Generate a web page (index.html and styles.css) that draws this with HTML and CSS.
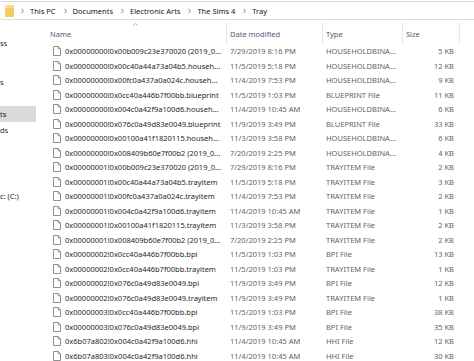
FILE: index.html
```html
<!DOCTYPE html>
<html lang="en">
<head>
<meta charset="utf-8">
<title>Tray</title>
<link rel="stylesheet" href="styles.css">
</head>
<body>
<svg class="defs" width="0" height="0" aria-hidden="true">
  <symbol id="file" viewBox="0 0 8 10">
    <path d="M0.5 0.5H5.2L7.5 2.8V9.5H0.5Z" fill="#fff" stroke="#8f8f8f"/>
    <path d="M5.2 0.5V2.8H7.5" fill="none" stroke="#8f8f8f"/>
  </symbol>
  <symbol id="chev" viewBox="0 0 3 6">
    <path d="M0.5 0.8L2.4 3L0.5 5.2" fill="none" stroke="#777" stroke-width="0.9"/>
  </symbol>
</svg>
<div class="window">
  <header class="addressbar">
    <div class="address">
      <svg class="folder" width="9" height="12" viewBox="0 0 9 12">
        <rect x="0" y="0" width="9" height="12" fill="#f3cd61"/>
        <rect x="0" y="0" width="9" height="3" fill="#f8dc8a"/>
      </svg>
      <svg class="sep" width="3" height="6"><use href="#chev"/></svg>
      <span class="crumb">This PC</span>
      <svg class="sep" width="3" height="6"><use href="#chev"/></svg>
      <span class="crumb">Documents</span>
      <svg class="sep" width="3" height="6"><use href="#chev"/></svg>
      <span class="crumb">Electronic Arts</span>
      <svg class="sep" width="3" height="6"><use href="#chev"/></svg>
      <span class="crumb">The Sims 4</span>
      <svg class="sep" width="3" height="6"><use href="#chev"/></svg>
      <span class="crumb">Tray</span>
    </div>
  </header>
  <div class="main">
    <nav class="sidebar">
      <div class="nav-item n1">ss</div>
      <div class="nav-item n2">s</div>
      <div class="nav-item n3 selected">ts</div>
      <div class="nav-item n4">ds</div>
      <div class="nav-item n5">c: (C:)</div>
    </nav>
    <section class="files">
      <div class="grid header">
        <div class="hcell hname">Name
          <svg class="sort" width="5" height="3" viewBox="0 0 5 3"><path d="M0.4 2.6L2.5 0.6L4.6 2.6" fill="none" stroke="#9a9a9a" stroke-width="0.8"/></svg>
        </div>
        <div class="hcell">Date modified</div>
        <div class="hcell">Type</div>
        <div class="hcell">Size</div>
      </div>
      <div class="list">
        <div class="grid row"><div class="fname"><svg class="ficon"><use href="#file"/></svg><span>0x00000000!0x00b009c23e370020 (2019_0...</span></div><div class="meta">7/29/2019 8:16 PM</div><div class="meta">HOUSEHOLDBINA...</div><div class="meta size">5 KB</div></div>
        <div class="grid row"><div class="fname"><svg class="ficon"><use href="#file"/></svg><span>0x00000000!0x00c40a44a73a04b5.househ...</span></div><div class="meta">11/5/2019 5:18 PM</div><div class="meta">HOUSEHOLDBINA...</div><div class="meta size">12 KB</div></div>
        <div class="grid row"><div class="fname"><svg class="ficon"><use href="#file"/></svg><span>0x00000000!0x00fc0a437a0a024c.househ...</span></div><div class="meta">11/4/2019 7:53 PM</div><div class="meta">HOUSEHOLDBINA...</div><div class="meta size">9 KB</div></div>
        <div class="grid row"><div class="fname"><svg class="ficon"><use href="#file"/></svg><span>0x00000000!0x0cc40a446b7f00bb.blueprint</span></div><div class="meta">11/5/2019 1:03 PM</div><div class="meta">BLUEPRINT File</div><div class="meta size">11 KB</div></div>
        <div class="grid row"><div class="fname"><svg class="ficon"><use href="#file"/></svg><span>0x00000000!0x004c0a42f9a100d6.househ...</span></div><div class="meta">11/4/2019 10:45 AM</div><div class="meta">HOUSEHOLDBINA...</div><div class="meta size">6 KB</div></div>
        <div class="grid row"><div class="fname"><svg class="ficon"><use href="#file"/></svg><span>0x00000000!0x076c0a49d83e0049.blueprint</span></div><div class="meta">11/9/2019 3:49 PM</div><div class="meta">BLUEPRINT File</div><div class="meta size">33 KB</div></div>
        <div class="grid row"><div class="fname"><svg class="ficon"><use href="#file"/></svg><span>0x00000000!0x00100a41f1820115.househ...</span></div><div class="meta">11/3/2019 3:58 PM</div><div class="meta">HOUSEHOLDBINA...</div><div class="meta size">6 KB</div></div>
        <div class="grid row"><div class="fname"><svg class="ficon"><use href="#file"/></svg><span>0x00000000!0x008409b60e7f00b2 (2019_0...</span></div><div class="meta">7/20/2019 2:25 PM</div><div class="meta">HOUSEHOLDBINA...</div><div class="meta size">4 KB</div></div>
        <div class="grid row"><div class="fname"><svg class="ficon"><use href="#file"/></svg><span>0x00000001!0x00b009c23e370020 (2019_0...</span></div><div class="meta">7/29/2019 8:16 PM</div><div class="meta">TRAYITEM File</div><div class="meta size">2 KB</div></div>
        <div class="grid row"><div class="fname"><svg class="ficon"><use href="#file"/></svg><span>0x00000001!0x00c40a44a73a04b5.trayitem</span></div><div class="meta">11/5/2019 5:18 PM</div><div class="meta">TRAYITEM File</div><div class="meta size">3 KB</div></div>
        <div class="grid row"><div class="fname"><svg class="ficon"><use href="#file"/></svg><span>0x00000001!0x00fc0a437a0a024c.trayitem</span></div><div class="meta">11/4/2019 7:53 PM</div><div class="meta">TRAYITEM File</div><div class="meta size">2 KB</div></div>
        <div class="grid row"><div class="fname"><svg class="ficon"><use href="#file"/></svg><span>0x00000001!0x004c0a42f9a100d6.trayitem</span></div><div class="meta">11/4/2019 10:45 AM</div><div class="meta">TRAYITEM File</div><div class="meta size">1 KB</div></div>
        <div class="grid row"><div class="fname"><svg class="ficon"><use href="#file"/></svg><span>0x00000001!0x00100a41f1820115.trayitem</span></div><div class="meta">11/3/2019 3:58 PM</div><div class="meta">TRAYITEM File</div><div class="meta size">2 KB</div></div>
        <div class="grid row"><div class="fname"><svg class="ficon"><use href="#file"/></svg><span>0x00000001!0x008409b60e7f00b2 (2019_0...</span></div><div class="meta">7/20/2019 2:25 PM</div><div class="meta">TRAYITEM File</div><div class="meta size">2 KB</div></div>
        <div class="grid row"><div class="fname"><svg class="ficon"><use href="#file"/></svg><span>0x00000002!0x0cc40a446b7f00bb.bpi</span></div><div class="meta">11/5/2019 1:03 PM</div><div class="meta">BPI File</div><div class="meta size">13 KB</div></div>
        <div class="grid row"><div class="fname"><svg class="ficon"><use href="#file"/></svg><span>0x00000002!0x0cc40a446b7f00bb.trayitem</span></div><div class="meta">11/5/2019 1:03 PM</div><div class="meta">TRAYITEM File</div><div class="meta size">1 KB</div></div>
        <div class="grid row"><div class="fname"><svg class="ficon"><use href="#file"/></svg><span>0x00000002!0x076c0a49d83e0049.bpi</span></div><div class="meta">11/9/2019 3:49 PM</div><div class="meta">BPI File</div><div class="meta size">12 KB</div></div>
        <div class="grid row"><div class="fname"><svg class="ficon"><use href="#file"/></svg><span>0x00000002!0x076c0a49d83e0049.trayitem</span></div><div class="meta">11/9/2019 3:49 PM</div><div class="meta">TRAYITEM File</div><div class="meta size">1 KB</div></div>
        <div class="grid row"><div class="fname"><svg class="ficon"><use href="#file"/></svg><span>0x00000003!0x0cc40a446b7f00bb.bpi</span></div><div class="meta">11/5/2019 1:03 PM</div><div class="meta">BPI File</div><div class="meta size">38 KB</div></div>
        <div class="grid row"><div class="fname"><svg class="ficon"><use href="#file"/></svg><span>0x00000003!0x076c0a49d83e0049.bpi</span></div><div class="meta">11/9/2019 3:49 PM</div><div class="meta">BPI File</div><div class="meta size">35 KB</div></div>
        <div class="grid row"><div class="fname"><svg class="ficon"><use href="#file"/></svg><span>0x6b07a802!0x004c0a42f9a100d6.hhi</span></div><div class="meta">11/4/2019 10:45 AM</div><div class="meta">HHI File</div><div class="meta size">12 KB</div></div>
        <div class="grid row"><div class="fname"><svg class="ficon"><use href="#file"/></svg><span>0x6b07a803!0x004c0a42f9a100d6.hhi</span></div><div class="meta">11/4/2019 10:45 AM</div><div class="meta">HHI File</div><div class="meta size">30 KB</div></div>
      </div>
    </section>
  </div>
</div>
</body>
</html>
```

FILE: styles.css
```css
* { box-sizing: border-box; }

html, body {
  margin: 0;
  padding: 0;
  background: #ffffff;
}

body {
  font-family: "Noto Sans", "Open Sans", "DejaVu Sans", sans-serif;
  font-size: 7.5px;
  color: #1f1f1f;
  width: 474px;
  height: 361px;
  overflow: hidden;
}

.defs {
  position: absolute;
  width: 0;
  height: 0;
  overflow: hidden;
}

.window {
  display: flex;
  flex-direction: column;
  height: 361px;
}

/* Address bar */
.addressbar {
  height: 21px;
  padding-top: 1px;
  flex: none;
}

.address {
  height: 19px;
  border-top: 1px solid #dcdcdc;
  border-bottom: 1px solid #dcdcdc;
  display: flex;
  align-items: center;
  padding-left: 5px;
  color: #141414;
}

.folder {
  display: block;
  flex: none;
  margin-right: 7px;
}

.sep {
  display: block;
  flex: none;
  margin-right: 6px;
}

.crumb {
  margin-right: 8px;
  white-space: nowrap;
}

/* Main */
.main {
  display: flex;
  flex: 1;
  min-height: 0;
}

.sidebar {
  width: 40px;
  flex: none;
  padding-top: 14px;
  display: flex;
  flex-direction: column;
  overflow: hidden;
}

.nav-item {
  height: 16px;
  line-height: 16px;
  width: 36px;
  white-space: nowrap;
  color: #1f1f1f;
}

.n2 { margin-top: 23px; }
.n3 { margin-top: 16px; }
.n5 { margin-top: 50px; }

.nav-item.selected {
  background: #d9d9d9;
}

/* File list */
.files {
  flex: 1;
  min-width: 0;
  display: flex;
  flex-direction: column;
}

.grid {
  display: grid;
  grid-template-columns: 187px 96px 80px 57px;
}

.header {
  height: 23px;
  flex: none;
}

.hcell {
  margin-top: 2px;
  height: 21px;
  border-right: 1px solid #e5e5e5;
  display: flex;
  align-items: center;
  padding-left: 3px;
  color: #4c607a;
  white-space: nowrap;
}

.hname {
  padding-left: 10px;
  position: relative;
}

.sort {
  position: absolute;
  left: 93px;
  top: 0;
}

.list {
  display: flex;
  flex-direction: column;
}

.row {
  height: 14.5px;
  line-height: 14.5px;
  white-space: nowrap;
}

.fname {
  display: flex;
  align-items: center;
  padding-left: 13px;
  overflow: hidden;
  color: #1f1f1f;
}

.ficon {
  width: 8px;
  height: 10px;
  flex: none;
  margin-right: 4px;
}

.meta {
  padding-left: 3px;
  color: #5f5f5f;
  overflow: hidden;
}

.size {
  text-align: right;
  padding-left: 0;
  padding-right: 6px;
}
```
